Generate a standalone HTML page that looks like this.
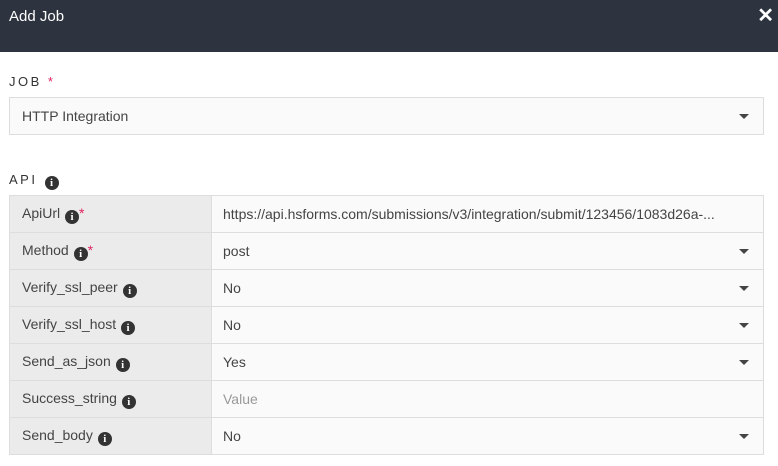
<!DOCTYPE html><html><head><style>
body{margin:0;width:778px;height:466px;background:#fff;font-family:"Liberation Sans",sans-serif;overflow:hidden;position:relative}
.hd{position:absolute;left:0;top:0;width:778px;height:52px;background:#2d3440;color:#fff}
.hd .t{position:absolute;left:9px;top:8px;font-size:15px}
.hd .x{position:absolute;right:4px;top:3px;font-size:20px;font-weight:bold}
.lbl{position:absolute;left:9px;font-size:13px;letter-spacing:2.5px;color:#333}
.req{color:#e0245e;letter-spacing:0}
.sel{position:absolute;left:9px;top:97px;width:753px;height:36px;border:1px solid #ddd;background:#fafafa;font-size:14px;color:#444;line-height:36px;box-sizing:content-box}
.sel span{padding-left:12px}
.car{position:absolute;right:14px;top:16px;width:0;height:0;border-left:5px solid transparent;border-right:5px solid transparent;border-top:5px solid #444}
table{position:absolute;left:9px;top:195px;border-collapse:collapse;width:755px}
td{border:1px solid #ddd;height:36px;padding:0;font-size:14px;color:#444;position:relative}
td.l{background:#ebebeb;width:189px;padding-left:12px}
td.r{background:#fafafa;padding-left:11px}
.i{display:inline-block;width:14px;height:14px;border-radius:50%;background:#333;color:#fff;font-size:11px;font-weight:bold;text-align:center;line-height:14px;font-family:"Liberation Serif",serif;vertical-align:-2px;margin-left:1px}
.ph{color:#999}
</style></head><body>
<div class="hd"><div class="t">Add Job</div><div class="x">✕</div></div>
<div class="lbl" style="top:74px">JOB <span class="req">*</span></div>
<div class="sel"><span>HTTP Integration</span><div class="car"></div></div>
<div class="lbl" style="top:172px">API <span class="i" style="letter-spacing:0">i</span></div>
<table>
<tr><td class="l">ApiUrl <span class="i">i</span><span class="req">*</span></td><td class="r">https://api.hsforms.com/submissions/v3/integration/submit/123456/1083d26a-...</td></tr>
<tr><td class="l">Method <span class="i">i</span><span class="req">*</span></td><td class="r">post<div class="car"></div></td></tr>
<tr><td class="l">Verify_ssl_peer <span class="i">i</span></td><td class="r">No<div class="car"></div></td></tr>
<tr><td class="l">Verify_ssl_host <span class="i">i</span></td><td class="r">No<div class="car"></div></td></tr>
<tr><td class="l">Send_as_json <span class="i">i</span></td><td class="r">Yes<div class="car"></div></td></tr>
<tr><td class="l">Success_string <span class="i">i</span></td><td class="r ph">Value</td></tr>
<tr><td class="l">Send_body <span class="i">i</span></td><td class="r">No<div class="car"></div></td></tr>
</table>
</body></html>
